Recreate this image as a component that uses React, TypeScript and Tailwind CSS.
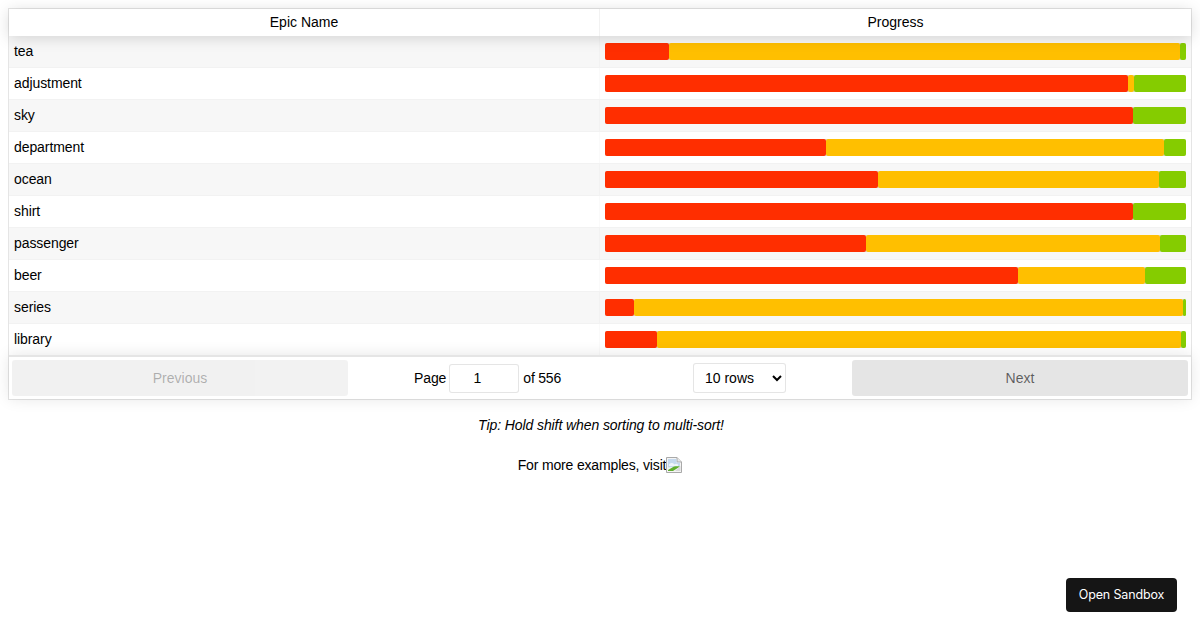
const rows = [
  { name: 'tea', red: 669, yellow: 1180 },
  { name: 'adjustment', red: 1128, yellow: 1134 },
  { name: 'sky', red: 1133, yellow: 1133 },
  { name: 'department', red: 826, yellow: 1164 },
  { name: 'ocean', red: 878, yellow: 1159 },
  { name: 'shirt', red: 1133, yellow: 1133 },
  { name: 'passenger', red: 866, yellow: 1160 },
  { name: 'beer', red: 1018, yellow: 1145 },
  { name: 'series', red: 634, yellow: 1183 },
  { name: 'library', red: 657, yellow: 1181 },
];

const BAR_LEFT = 605;
const BAR_RIGHT = 1186;

function ProgressBar({ red, yellow }: { red: number; yellow: number }) {
  const total = BAR_RIGHT - BAR_LEFT;
  const segments = [
    { color: 'bg-[#ff2e00]', width: red - BAR_LEFT },
    { color: 'bg-[#ffbf00]', width: yellow - red },
    { color: 'bg-[#85cc00]', width: BAR_RIGHT - yellow },
  ];
  return (
    <div className="flex h-[17px] w-full rounded-[2px] bg-[#dadada]">
      {segments.map((s, i) => (
        <div key={i} className={`h-full rounded-[2px] ${s.color}`} style={{ width: `${(s.width / total) * 100}%` }} />
      ))}
    </div>
  );
}

function BrokenImage() {
  return (
    <svg width="16" height="16" viewBox="0 0 16 16" className="shrink-0">
      <path d="M0.5 0.5H11L15.5 5V15.5H0.5Z" fill="#f4f4f4" stroke="#a9a9a9" />
      <path d="M11 0.5V5H15.5" fill="#e6e6e6" stroke="#a9a9a9" />
      <path d="M2 2H10.5V5.5H14V9L2 10.5Z" fill="#c5d9ee" />
      <path d="M3 7.5C4.5 5.5 7 5.5 8.5 7.5C9.5 6.5 11 6.5 12 7.5V9H3Z" fill="#eef4fa" />
      <path d="M2 14V13L8 9.5C10 9 13 9 14 9.5L7 14Z" fill="#5fae2e" />
      <path d="M9 14L14.5 9V14Z" fill="#d9d9d9" />
    </svg>
  );
}

export default function App() {
  return (
    <div className="relative h-[630px] overflow-hidden bg-white p-2 font-['Helvetica_Neue',Helvetica,Arial,sans-serif] text-[14px] leading-[17px] text-black">
      <div className="flex flex-col border border-black/10">
        <div className="relative z-10 grid grid-cols-[591px_1fr] bg-white shadow-[0_2px_15px_0_rgba(0,0,0,0.15)]">
          <div className="border-r border-black/5 px-[5px] py-[5px] text-center">Epic Name</div>
          <div className="px-[5px] py-[5px] text-center">Progress</div>
        </div>
        <div className="flex flex-col">
          {rows.map((r, i) => (
            <div key={r.name} className={i < rows.length - 1 ? 'border-b border-black/5' : ''}>
              <div className={`grid grid-cols-[591px_1fr] ${i % 2 === 0 ? 'bg-[#f7f7f7]' : 'bg-white'}`}>
                <div className="border-r border-black/[0.02] px-[5px] py-[7px] tracking-[-0.08px]">{r.name}</div>
                <div className="px-[5px] py-[7px]">
                  <ProgressBar red={r.red} yellow={r.yellow} />
                </div>
              </div>
            </div>
          ))}
        </div>
        <div className="relative z-10 flex border-t-2 border-black/10 bg-white p-[3px] shadow-[0_0_15px_0_rgba(0,0,0,0.1)]">
          <button className="h-9 flex-1 rounded-[3px] bg-black/10 text-black/60 opacity-50">Previous</button>
          <div className="flex flex-[1.5] items-center justify-around">
            <div className="flex w-[147px] items-center whitespace-nowrap">
              <span className="tracking-[-0.1px]">Page</span>
              <input
                readOnly
                value="1"
                className="mr-1 ml-[3px] h-[29px] w-[70px] shrink-0 rounded-[3px] border border-black/10 bg-white pr-[19px] pl-[5px] text-center outline-none"
              />
              <span className="tracking-[-0.2px]">of 556</span>
            </div>
            <select className="h-[30px] w-[93px] rounded-[3px] border border-black/10 bg-white px-[5px] pl-[7px] outline-none">
              <option>10 rows</option>
            </select>
          </div>
          <button className="h-9 flex-1 rounded-[3px] bg-black/10 text-black/60">Next</button>
        </div>
      </div>
      <div className="mt-[17px] pl-[2px] text-center italic leading-[16px] tracking-[-0.09px]">
        Tip: Hold shift when sorting to multi-sort!
      </div>
      <div className="mt-6 flex items-center justify-center leading-[16px]">
        <span className="tracking-[-0.16px]">For more examples, visit</span>
        <BrokenImage />
      </div>
      <button className="absolute bottom-[18px] right-[23px] h-[34px] w-[111px] rounded-[4px] bg-[#151515] pb-[2px] font-['Inter',sans-serif] text-[12.5px] tracking-[-0.15px] text-white">
        Open Sandbox
      </button>
    </div>
  );
}
